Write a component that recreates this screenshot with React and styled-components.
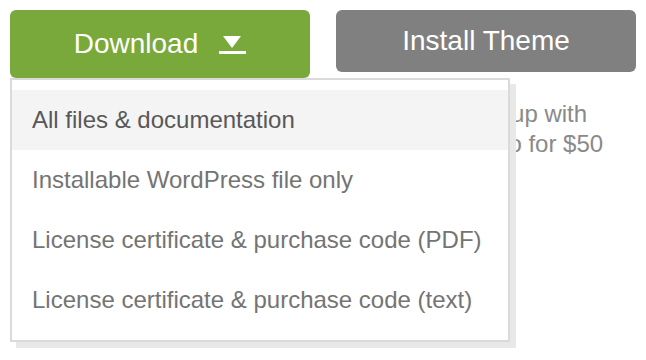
import styled, { createGlobalStyle } from "styled-components";

const Global = createGlobalStyle`
    body {
        margin: 0;
        background: #ffffff;
        font-family: "Liberation Sans", Arial, Helvetica, sans-serif;
    }
`;

const Page = styled.div`
    display: flex;
    gap: 26px;
    padding: 10px;
    width: 646px;
    height: 360px;
    box-sizing: border-box;
`;

const LeftCol = styled.div`
    position: relative;
    width: 300px;
    z-index: 2;
`;

const RightCol = styled.div`
    display: flex;
    flex-direction: column;
    width: 300px;
`;

const Button = styled.button`
    display: flex;
    align-items: center;
    justify-content: center;
    gap: 21px;
    width: 300px;
    height: ${(p) => p.$height}px;
    padding: 0;
    border: none;
    border-radius: 6px;
    background: ${(p) => p.$bg};
    color: #ffffff;
    font-family: "Liberation Sans", Arial, Helvetica, sans-serif;
    font-size: 28px;
    cursor: pointer;
`;

const Menu = styled.ul`
    position: absolute;
    top: 68px;
    left: 0;
    width: 500px;
    margin: 0;
    padding: 10px 0;
    list-style: none;
    box-sizing: border-box;
    background: #ffffff;
    border: 2px solid #dadada;
    box-shadow: 6px 6px 0 #e8e8e8;
`;

const Item = styled.li`
    height: 60px;
    display: flex;
    align-items: center;
    padding-left: 20px;
    font-size: 24px;
    color: ${(p) => (p.$active ? "#585858" : "#747474")};
    background: ${(p) => (p.$active ? "#f4f4f4" : "transparent")};
`;

const Note = styled.p`
    margin: 27px 0 0;
    padding-left: 23px;
    font-size: 24px;
    line-height: 30px;
    color: #8a8a8a;
    white-space: nowrap;
`;

const DownIcon = () => (
    <svg width="27" height="20" viewBox="0 0 27 20">
        <polygon points="4,2 22,2 13,14" fill="#ffffff" />
        <rect x="0" y="17" width="27" height="3" fill="#ffffff" />
    </svg>
);

const items = [
    "All files & documentation",
    "Installable WordPress file only",
    "License certificate & purchase code (PDF)",
    "License certificate & purchase code (text)",
];

export default function App() {
    return (
        <>
            <Global />
            <Page>
                <LeftCol>
                    <Button $bg="#7aa93b" $height={68}>
                        <span>Download</span>
                        <DownIcon />
                    </Button>
                    <Menu>
                        {items.map((el, i) => (
                            <Item key={i} $active={i === 0}>{el}</Item>
                        ))}
                    </Menu>
                </LeftCol>
                <RightCol>
                    <Button $bg="#808080" $height={62}>Install Theme</Button>
                    <Note>
                        Have us set it up with
                        <br />
                        Upgrade to Pro for $50
                    </Note>
                </RightCol>
            </Page>
        </>
    );
}
